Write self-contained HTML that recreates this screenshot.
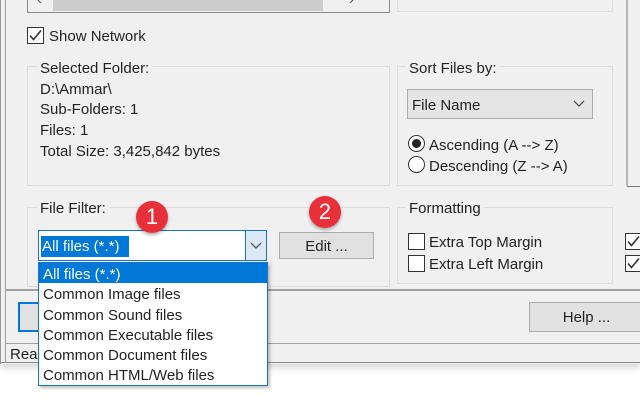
<!DOCTYPE html>
<html><head><style>
*{margin:0;padding:0;box-sizing:border-box}
body{width:640px;height:402px;background:#fff;position:relative;overflow:hidden;font-family:"Liberation Sans",sans-serif;font-size:15px;color:#222}
.a{position:absolute}
.win{left:0;top:0;width:640px;height:364px;background:#f0f0f0;border-left:1px solid #999;box-shadow:0 4px 6px rgba(0,0,0,.15)}
.grp{position:absolute;border:1px solid #dcdcdc}
.lbl{position:absolute;background:#f0f0f0;padding:2px 3px 0;line-height:18px}
.t{position:absolute;line-height:20px;white-space:nowrap;padding-top:2px}
.cb{position:absolute;width:17px;height:17px;border:1px solid #333;background:#fff}
.rb{position:absolute;width:17px;height:17px;border:1px solid #333;border-radius:50%;background:#fff}
.btn{position:absolute;background:#e1e1e1;border:1px solid #adadad;text-align:center;padding-top:2px}
.badge{position:absolute;width:32px;height:32px;border-radius:50%;background:#e8303a;color:#fff;text-align:center;line-height:32px;font-size:22px;box-shadow:0 2px 3px rgba(0,0,0,.3)}
.it{height:20.3px;line-height:20px;padding:2px 0 0 4px;white-space:nowrap}
</style></head><body>
<div class="a win"></div>
<div class="a" style="left:5px;top:0;width:1px;height:362px;background:#a0a0a0"></div>
<div class="a" style="left:27px;top:-2px;width:363px;height:15px;border:1px solid #8a8a8a;background:#f0f0f0"></div>
<div class="a" style="left:53px;top:0;width:270px;height:11px;background:#cdcdcd"></div>
<div class="t" style="left:37px;top:-12px;color:#555">‹</div>
<div class="t" style="left:349px;top:-12px;color:#555">›</div>
<div class="grp" style="left:397px;top:-2px;width:216px;height:14px"></div>
<div class="a" style="left:626px;top:0;width:2px;height:186px;background:#b5b5b5"></div>
<div class="a" style="left:627px;top:186px;width:13px;height:1px;background:#777"></div>

<div class="cb" style="left:27px;top:27px"><svg width="15" height="15"><path d="M2 7.5l3.5 4L13 2.5" stroke="#333" stroke-width="1.6" fill="none"/></svg></div>
<div class="t" style="left:49px;top:25px">Show Network</div>

<div class="grp" style="left:27px;top:66px;width:363px;height:120px"></div>
<div class="lbl" style="left:37px;top:58px">Selected Folder:</div>
<div class="t" style="left:40px;top:78px">D:\Ammar\</div>
<div class="t" style="left:40px;top:98px">Sub-Folders: 1</div>
<div class="t" style="left:40px;top:119px">Files: 1</div>
<div class="t" style="left:40px;top:140px">Total Size: 3,425,842 bytes</div>

<div class="grp" style="left:397px;top:66px;width:216px;height:120px"></div>
<div class="lbl" style="left:406px;top:58px">Sort Files by:</div>
<div class="a" style="left:407px;top:89px;width:186px;height:30px;background:#e5e5e5;border:1px solid #adadad"></div>
<div class="t" style="left:412px;top:94px">File Name</div>
<svg class="a" style="left:573px;top:100px" width="12" height="8"><path d="M1 1l5 5 5-5" stroke="#444" fill="none" stroke-width="1.2"/></svg>
<div class="rb" style="left:408px;top:135px"><div class="a" style="left:3px;top:3px;width:9px;height:9px;border-radius:50%;background:#222"></div></div>
<div class="t" style="left:429px;top:134px">Ascending (A --&gt; Z)</div>
<div class="rb" style="left:408px;top:156px"></div>
<div class="t" style="left:429px;top:155px">Descending (Z --&gt; A)</div>

<div class="grp" style="left:27px;top:207px;width:363px;height:80px"></div>
<div class="lbl" style="left:37px;top:198px">File Filter:</div>
<div class="a" style="left:38px;top:230px;width:229px;height:31px;background:#fff;border:1px solid #1a73c9"></div>
<div class="a" style="left:245px;top:231px;width:21px;height:29px;background:#dbe9f7;border-left:1px solid #1a73c9"></div>
<svg class="a" style="left:250px;top:242px" width="12" height="8"><path d="M1 1l5 5 5-5" stroke="#444" fill="none" stroke-width="1.2"/></svg>
<div class="a" style="left:41px;top:236px;width:88px;height:21px;background:#0078d7"></div>
<div class="t" style="left:42px;top:235px;color:#fff">All files (*.*)</div>
<div class="btn" style="left:279px;top:232px;width:95px;height:27px;line-height:23px">Edit ...</div>

<div class="grp" style="left:397px;top:207px;width:216px;height:77px"></div>
<div class="lbl" style="left:406px;top:198px">Formatting</div>
<div class="cb" style="left:408px;top:233px"></div>
<div class="t" style="left:429px;top:231px">Extra Top Margin</div>
<div class="cb" style="left:408px;top:255px"></div>
<div class="t" style="left:429px;top:253px">Extra Left Margin</div>
<div class="cb" style="left:625px;top:233px"><svg width="15" height="15"><path d="M2 7.5l3.5 4L13 2.5" stroke="#333" stroke-width="1.6" fill="none"/></svg></div>
<div class="cb" style="left:625px;top:255px"><svg width="15" height="15"><path d="M2 7.5l3.5 4L13 2.5" stroke="#333" stroke-width="1.6" fill="none"/></svg></div>

<div class="a" style="left:6px;top:289px;width:634px;height:2px;background:#a0a0a0"></div>
<div class="a" style="left:18px;top:302px;width:40px;height:30px;border:2px solid #0078d7;background:#e1e1e1"></div>
<div class="btn" style="left:529px;top:302px;width:115px;height:30px;line-height:26px">Help ...</div>
<div class="a" style="left:6px;top:343px;width:634px;height:1px;background:#a0a0a0"></div>
<div class="t" style="left:10px;top:343px">Rea</div>
<div class="a" style="left:0;top:362px;width:640px;height:1px;background:#888"></div>

<div class="a" style="left:38px;top:262px;width:230px;height:124px;background:#fff;border:1px solid #1a73c9;box-shadow:2px 2px 3px rgba(0,0,0,.25)">
<div class="it" style="background:#0078d7;color:#fff">All files (*.*)</div>
<div class="it">Common Image files</div>
<div class="it">Common Sound files</div>
<div class="it">Common Executable files</div>
<div class="it">Common Document files</div>
<div class="it">Common HTML/Web files</div>
</div>

<div class="badge" style="left:136px;top:201px">1</div>
<div class="badge" style="left:309px;top:196px">2</div>
</body></html>
